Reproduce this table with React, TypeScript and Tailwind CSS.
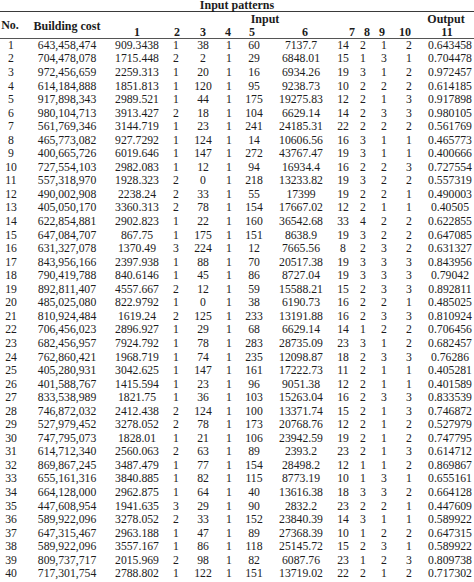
import React from 'react'

// one line per pattern: no, building cost, inputs 1-10, output 11
const raw = `1 643,458,474 909.3438 1 38 1 60 7137.7 14 2 1 2 0.643458
2 704,478,078 1715.448 2 2 1 29 6848.01 15 1 3 1 0.704478
3 972,456,659 2259.313 1 20 1 16 6934.26 19 3 1 2 0.972457
4 614,184,888 1851.813 1 120 1 95 9238.73 10 2 2 2 0.614185
5 917,898,343 2989.521 1 44 1 175 19275.83 12 2 1 3 0.917898
6 980,104,713 3913.427 2 18 1 104 6629.14 14 2 3 3 0.980105
7 561,769,346 3144.719 1 23 1 241 24185.31 22 2 2 2 0.561769
8 465,773,082 927.7292 1 124 1 14 10606.56 16 3 1 1 0.465773
9 400,665,726 6019.646 1 147 1 272 43767.47 19 3 1 1 0.400666
10 727,554,103 2982.083 1 12 1 94 16934.4 16 2 2 3 0.727554
11 557,318,970 1928.323 2 0 1 218 13233.82 19 3 2 2 0.557319
12 490,002,908 2238.24 2 33 1 55 17399 19 2 2 1 0.490003
13 405,050,170 3360.313 2 78 1 154 17667.02 12 2 1 1 0.40505
14 622,854,881 2902.823 1 22 1 160 36542.68 33 4 2 2 0.622855
15 647,084,707 867.75 1 175 1 151 8638.9 19 3 2 2 0.647085
16 631,327,078 1370.49 3 224 1 12 7665.56 8 2 3 2 0.631327
17 843,956,166 2397.938 1 88 1 70 20517.38 19 3 3 3 0.843956
18 790,419,788 840.6146 1 45 1 86 8727.04 19 3 3 3 0.79042
19 892,811,407 4557.667 2 12 1 59 15588.21 15 2 3 3 0.892811
20 485,025,080 822.9792 1 0 1 38 6190.73 16 2 2 1 0.485025
21 810,924,484 1619.24 2 125 1 233 13191.88 16 2 3 3 0.810924
22 706,456,023 2896.927 1 29 1 68 6629.14 14 1 2 2 0.706456
23 682,456,957 7924.792 1 78 1 283 28735.09 23 3 1 2 0.682457
24 762,860,421 1968.719 1 74 1 235 12098.87 18 2 3 3 0.76286
25 405,280,931 3042.625 1 147 1 161 17222.73 11 2 1 1 0.405281
26 401,588,767 1415.594 1 23 1 96 9051.38 12 2 1 1 0.401589
27 833,538,989 1821.75 1 36 1 103 15263.04 16 2 3 3 0.833539
28 746,872,032 2412.438 2 124 1 100 13371.74 15 2 1 3 0.746872
29 527,979,452 3278.052 2 78 1 173 20768.76 12 2 1 2 0.527979
30 747,795,073 1828.01 1 21 1 106 23942.59 19 2 1 2 0.747795
31 614,712,340 2560.063 2 63 1 89 2393.2 23 2 1 3 0.614712
32 869,867,245 3487.479 1 77 1 154 28498.2 12 1 1 2 0.869867
33 655,161,316 3840.885 1 82 1 115 8773.19 10 1 3 1 0.655161
34 664,128,000 2962.875 1 64 1 40 13616.38 18 3 3 2 0.664128
35 447,608,954 1941.635 3 29 1 90 2832.2 23 2 2 1 0.447609
36 589,922,096 3278.052 2 33 1 152 23840.39 14 3 1 1 0.589922
37 647,315,467 2963.188 1 47 1 89 27368.39 10 1 2 2 0.647315
38 589,922,096 3557.167 1 86 1 118 25145.72 15 2 3 1 0.589922
39 809,737,717 2015.969 2 98 1 82 6087.76 23 1 2 3 0.809738
40 717,301,754 2788.802 1 122 1 151 13719.02 22 2 1 2 0.717302`

const rows = raw.split('\n').map((line) => line.trim().split(' '))

const cols =
  'grid grid-cols-[22px_90px_50px_28px_26px_26px_24px_70px_14px_26px_16px_34px_48px]'

// header numbers sit a little off the data columns in the original
const headNums = [
  { n: '1', cls: '' },
  { n: '2', cls: 'ml-[2px]' },
  { n: '3', cls: '' },
  { n: '4', cls: 'mr-[2px]' },
  { n: '5', cls: 'mr-[4px]' },
  { n: '6', cls: 'ml-[8px]' },
  { n: '7', cls: 'ml-[18px]' },
  { n: '8', cls: 'ml-[8px]' },
  { n: '9', cls: 'mr-[4px]' },
  { n: '10', cls: 'mr-[8px]' },
  { n: '11', cls: 'mr-[6px]' },
]

export default function App() {
  return (
    <div className="w-[474px] h-[582px] overflow-hidden bg-white text-[#1c1c1c] font-['Liberation_Serif',_'Times_New_Roman',_serif]">
      <div className="h-[11px] border-b-[1.5px] border-[#3a3a3a] text-center text-[12px] font-bold leading-[11px] box-content">
        Input patterns
      </div>

      <div className={`${cols} grid-rows-[13px_13px] border-b border-[#555] text-[12px] font-bold`}>
        <div className="row-span-2 flex items-center justify-center">
          <span className="ml-[-2px]">No.</span>
        </div>
        <div className="row-span-2 flex items-center justify-center">
          <span className="mt-[1px]">Building cost</span>
        </div>
        <div className="col-span-10 flex items-center justify-center leading-none">
          <span className="mr-[8px] mt-[1px]">Input</span>
        </div>
        <div className="flex items-center justify-center leading-none">
          <span className="mr-[8px] mt-[1px]">Output</span>
        </div>
        {headNums.map((h) => (
          <div key={h.n} className="flex items-center justify-center leading-none whitespace-nowrap">
            <span className={h.cls}>{h.n}</span>
          </div>
        ))}
      </div>

      <div className="text-[11.7px]">
        {rows.map((r) => (
          <div key={r[0]} className={`${cols} h-[13.56px]`}>
            {r.map((v, i) => (
              <div key={i} className="flex items-center justify-center whitespace-nowrap leading-none">
                {v}
              </div>
            ))}
          </div>
        ))}
      </div>
    </div>
  )
}
